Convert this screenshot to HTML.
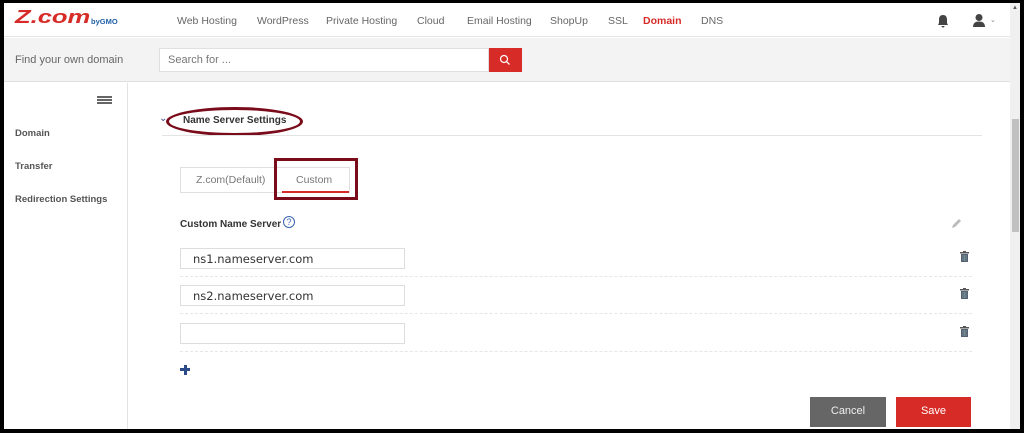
<!DOCTYPE html>
<html><head><meta charset="utf-8"><style>
*{box-sizing:border-box;margin:0;padding:0}
body{width:1024px;height:433px;background:#000;position:relative;overflow:hidden;font-family:"Liberation Sans",sans-serif;color:#555}
.a{position:absolute}
#page{left:4px;top:3px;width:1016px;height:426px;background:#fff;overflow:hidden}
.nav{font-size:10.5px;color:#666;top:12px}
.side{font-size:9.5px;font-weight:bold;color:#555;left:11px}
.inp{left:176px;width:225px;height:21px;border:1px solid #ddd;color:#333;padding:3px 12px;font-family:"DejaVu Sans",sans-serif;font-size:11.5px}
.dash{left:176px;width:792px;border-top:1px dashed #e6e6e6}
.trash{width:9px;height:11px}
</style></head><body>
<div id="page" class="a">
 <div class="a" style="left:0;top:0;width:1006px;height:34px;border-bottom:1px solid #e5e5e5;background:#fff"></div>
 <div class="a" style="left:11px;top:4px;font-size:18px;font-weight:bold;font-style:italic;color:#d72b27;transform:scaleX(1.42);transform-origin:left;line-height:20px">Z.com</div>
 <div class="a" style="left:87px;top:14px;font-size:7.5px;font-weight:bold;color:#1f5fa8">byGMO</div>
 <div class="a nav" style="left:173px">Web Hosting</div>
 <div class="a nav" style="left:253px">WordPress</div>
 <div class="a nav" style="left:322px">Private Hosting</div>
 <div class="a nav" style="left:413px">Cloud</div>
 <div class="a nav" style="left:463px">Email Hosting</div>
 <div class="a nav" style="left:546px">ShopUp</div>
 <div class="a nav" style="left:604px">SSL</div>
 <div class="a nav" style="left:639px;color:#d72b27;font-weight:bold">Domain</div>
 <div class="a nav" style="left:697px">DNS</div>
 <svg class="a" style="left:933px;top:11px" width="12" height="14" viewBox="0 0 12 14"><path d="M6 1c-3 0-4 2-4 5v3l-1 2h10l-1-2V6c0-3-1-5-4-5z M4.5 12h3a1.5 1.5 0 0 1-3 0z" fill="#444"/></svg>
 <svg class="a" style="left:968px;top:10px" width="14" height="15" viewBox="0 0 14 15"><circle cx="7" cy="4.5" r="3.5" fill="#444"/><path d="M1 14c0-4 2.5-5.5 6-5.5s6 1.5 6 5.5z" fill="#444"/></svg>
 <div class="a" style="left:986px;top:13px;font-size:7px;color:#888">⌄</div>
 <div class="a" style="left:0;top:35px;width:1006px;height:44px;background:#f3f3f3;border-bottom:1px solid #e0e0e0"></div>
 <div class="a" style="left:11px;top:51px;font-size:11px;color:#666">Find your own domain</div>
 <div class="a" style="left:155px;top:45px;width:330px;height:24px;background:#fff;border:1px solid #e0e0e0;font-size:11px;color:#777;padding:5px 8px">Search for ...</div>
 <div class="a" style="left:485px;top:45px;width:33px;height:24px;background:#d72b27"></div>
 <svg class="a" style="left:495px;top:51px" width="12" height="12" viewBox="0 0 12 12"><circle cx="5" cy="5" r="3.5" stroke="#fff" stroke-width="1.2" fill="none"/><path d="M7.5 7.5l3 3" stroke="#fff" stroke-width="1.3"/></svg>
 <div class="a" style="left:123px;top:80px;width:1px;height:350px;background:#e3e3e3"></div>
 <div class="a" style="left:93px;top:93px;width:15px;height:1.5px;background:#666;box-shadow:0 3px 0 #666,0 6px 0 #666"></div>
 <div class="a side" style="top:125px">Domain</div>
 <div class="a side" style="top:158px">Transfer</div>
 <div class="a side" style="top:191px">Redirection Settings</div>
 <div class="a" style="left:155px;top:110px;font-size:10px;color:#3a4a8a">⌄</div>
 <div class="a" style="left:162px;top:104px;width:137px;height:29px;border:3px solid #7a0b1a;border-radius:50%"></div>
 <div class="a" style="left:179px;top:112px;font-size:10px;font-weight:bold;color:#333">Name Server Settings</div>
 <div class="a" style="left:158px;top:132px;width:820px;height:1px;background:#e3e3e3"></div>
 <div class="a" style="left:176px;top:164px;width:170px;height:26px;border:1px solid #e0e0e0"></div>
 <div class="a" style="left:192px;top:171px;font-size:10.5px;color:#777">Z.com(Default)</div>
 <div class="a" style="left:270px;top:155px;width:84px;height:42px;border:3px solid #7a0b1a"></div>
 <div class="a" style="left:292px;top:171px;font-size:10.5px;color:#777">Custom</div>
 <div class="a" style="left:278px;top:188px;width:67px;height:2px;background:#d72b27"></div>
 <div class="a" style="left:176px;top:216px;font-size:10px;font-weight:bold;color:#333">Custom Name Server</div>
 <div class="a" style="left:279px;top:213px;width:12px;height:12px;border:1px solid #3a64b0;border-radius:50%;font-size:9px;color:#3a64b0;text-align:center;line-height:10px">?</div>
 <svg class="a" style="left:946px;top:214px" width="13" height="13" viewBox="0 0 13 13"><path d="M2 11l1-3 6-6 2 2-6 6z" fill="#bbb"/></svg>
 <div class="a inp" style="top:245px">ns1.nameserver.com</div>
 <div class="a dash" style="top:273px"></div>
 <div class="a inp" style="top:282px">ns2.nameserver.com</div>
 <div class="a dash" style="top:310px"></div>
 <div class="a inp" style="top:320px"></div>
 <div class="a dash" style="top:348px"></div>
 <svg class="a trash" style="left:956px;top:248px" viewBox="0 0 9 11"><rect x="0" y="1" width="9" height="1.5" fill="#555"/><rect x="3" y="0" width="3" height="1.5" fill="#555"/><rect x="1" y="3" width="7" height="8" fill="#556070"/><path d="M3 4v6M4.5 4v6M6 4v6" stroke="#8aa" stroke-width=".6"/></svg>
 <svg class="a trash" style="left:956px;top:285px" viewBox="0 0 9 11"><rect x="0" y="1" width="9" height="1.5" fill="#555"/><rect x="3" y="0" width="3" height="1.5" fill="#555"/><rect x="1" y="3" width="7" height="8" fill="#556070"/><path d="M3 4v6M4.5 4v6M6 4v6" stroke="#8aa" stroke-width=".6"/></svg>
 <svg class="a trash" style="left:956px;top:323px" viewBox="0 0 9 11"><rect x="0" y="1" width="9" height="1.5" fill="#555"/><rect x="3" y="0" width="3" height="1.5" fill="#555"/><rect x="1" y="3" width="7" height="8" fill="#556070"/><path d="M3 4v6M4.5 4v6M6 4v6" stroke="#8aa" stroke-width=".6"/></svg>
 <div class="a" style="left:176px;top:365px;width:10px;height:3px;background:#2a4a8a"></div>
 <div class="a" style="left:179.5px;top:361.5px;width:3px;height:10px;background:#2a4a8a"></div>
 <div class="a" style="left:806px;top:394px;width:76px;height:30px;background:#666;color:#eee;font-size:11px;text-align:center;line-height:28px">Cancel</div>
 <div class="a" style="left:892px;top:394px;width:75px;height:30px;background:#d72b27;color:#fff;font-size:11px;text-align:center;line-height:28px">Save</div>
 <div class="a" style="left:1006px;top:0;width:10px;height:426px;background:#f0f0f0"></div>
 <div class="a" style="left:1008px;top:116px;width:7px;height:113px;background:#c1c1c1"></div>
 <div class="a" style="left:1008px;top:2px;font-size:6px;color:#555">▲</div>
</div>
</body></html>
